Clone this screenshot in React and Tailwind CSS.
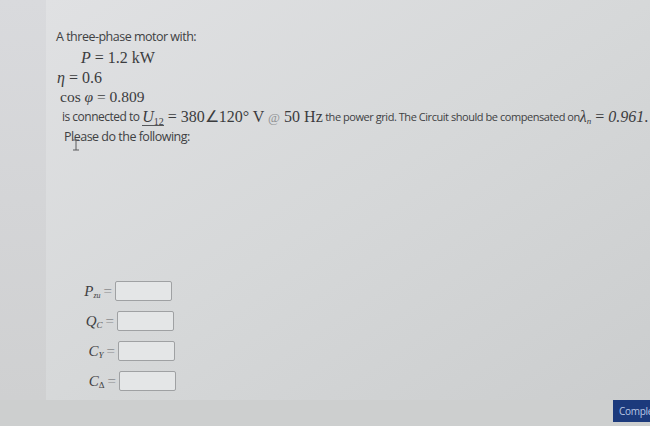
import React from "react";

function M({ children, className = "" }) {
  return (
    <span className={`font-['Liberation_Serif',serif] ${className}`}>{children}</span>
  );
}

function Row({ label, ml }) {
  return (
    <div className={`flex items-center h-[20px] ${ml}`}>
      <div className="w-[38px] flex justify-end items-center pr-[3px] text-[#3f4042] font-['Liberation_Serif',serif] text-[15px]">
        {label}
        <span className="ml-[3px] text-[#8a8b8d]">=</span>
      </div>
      <div className="w-[57px] h-[20px] bg-[#e4e6e7] border border-[#9fa1a3] rounded-[2px]" />
    </div>
  );
}

export default function App() {
  return (
    <div className="w-[650px] h-[426px] overflow-hidden flex flex-col bg-[#cdcfcf] font-['Open_Sans',sans-serif]">
      <div className="flex h-[400px] shrink-0">
        <div className="w-[46px] shrink-0 bg-linear-to-b from-[#d9dadd] to-[#cfd0d1]" />
        <div className="flex-1 min-w-0 bg-linear-to-br from-[#e0e1e3] via-[#d6d8d9] to-[#cbcdce] pt-[27px] pl-[10px] relative">
          <div className="h-[20px] flex items-center text-[12.5px] tracking-[-0.5px] text-[#404143]">
            A three-phase motor with:
          </div>
          <div className="h-[21px] flex items-center ml-[25px] text-[16px] text-[#3b3c3e]">
            <M><i>P</i> = 1.2 kW</M>
          </div>
          <div className="h-[19px] flex items-center ml-[1px] text-[16px] text-[#3b3c3e]">
            <M><i>η</i> = 0.6</M>
          </div>
          <div className="h-[19px] flex items-center ml-[4px] text-[15.5px] text-[#3b3c3e]">
            <M>cos <i>φ</i> = 0.809</M>
          </div>
          <div className="h-[22px] flex items-center ml-[6px] whitespace-nowrap text-[12px] tracking-[-0.5px] text-[#404143]">
            <span>is connected to&nbsp;</span>
            <M className="text-[16px] tracking-normal text-[#3b3c3e]">
              <span className="border-b border-[#55575a] leading-[16px] inline-block">
                <i>U</i>
                <sub className="text-[10px]">12</sub>
              </span>
              {" "}= 380∠120° V <span className="text-[#909294] text-[13px]">@</span> 50 Hz
            </M>
            <span className="text-[11px] tracking-[-0.45px]">&nbsp;the power grid. The Circuit should be compensated on</span>
            <M className="text-[16px] tracking-normal text-[#3b3c3e]">
              <i>λ</i>
              <sub className="text-[9px]"><i>n</i></sub> = <i>0.961</i>.
            </M>
            <span className="text-[11px]">&nbsp;Co</span>
          </div>
          <div className="h-[19px] flex items-center ml-[8px] text-[12.5px] tracking-[-0.5px] text-[#404143] relative">
            Please do the following:
            <svg className="absolute left-[8px] top-[11px]" width="8" height="12" viewBox="0 0 8 12">
              <path d="M1 1 H7 M4 1 V11 M1 11 H7" stroke="#5a5b5d" strokeWidth="1" fill="none" />
            </svg>
          </div>
          <div className="mt-[134px] flex flex-col gap-[10px]">
            <Row
              ml="ml-[21px]"
              label={
                <span>
                  <i>P</i>
                  <sub className="text-[8px]"><i>zu</i></sub>
                </span>
              }
            />
            <Row
              ml="ml-[23px]"
              label={
                <span>
                  <i>Q</i>
                  <sub className="text-[9px]"><i>C</i></sub>
                </span>
              }
            />
            <Row
              ml="ml-[24px]"
              label={
                <span>
                  <i>C</i>
                  <sub className="text-[9px]"><i>Y</i></sub>
                </span>
              }
            />
            <Row
              ml="ml-[25px]"
              label={
                <span>
                  <i>C</i>
                  <sub className="text-[9px]">Δ</sub>
                </span>
              }
            />
          </div>
        </div>
      </div>
      <div className="flex-1 flex items-start pl-[613px]">
        <div className="shrink-0 w-[64px] h-[22px] bg-[#1c3a7c] flex items-center pl-[6px] text-[10px] tracking-[-0.3px] text-[#b9c6e4]">
          Complete
        </div>
      </div>
    </div>
  );
}
